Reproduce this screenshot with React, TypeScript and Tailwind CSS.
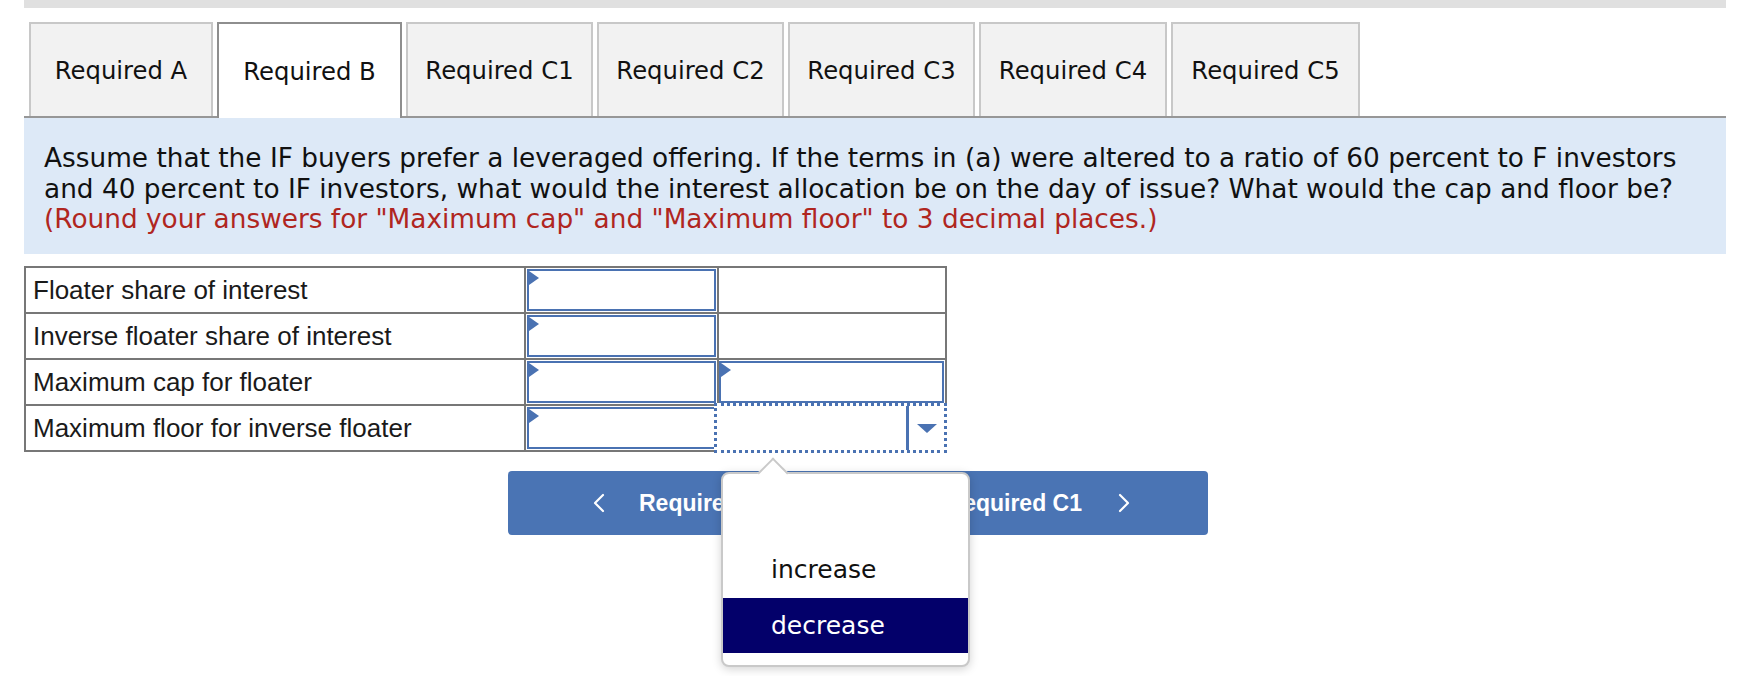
import { ChevronLeft, ChevronRight } from "lucide-react";

const tabs = [
  { label: "Required A", w: "w-[184px]" },
  { label: "Required B", w: "w-[185px]", active: true },
  { label: "Required C1", w: "w-[187px]" },
  { label: "Required C2", w: "w-[187px]" },
  { label: "Required C3", w: "w-[187px]" },
  { label: "Required C4", w: "w-[188px]" },
  { label: "Required C5", w: "w-[189px]" },
];

const rows = [
  { label: "Floater share of interest", third: "none" },
  { label: "Inverse floater share of interest", third: "none" },
  { label: "Maximum cap for floater", third: "input" },
  { label: "Maximum floor for inverse floater", third: "select" },
];

// blue answer box with the little flag in the corner
function AnswerBox() {
  return (
    <div className="relative h-full w-full border-2 border-[#4a72b2] bg-white">
      <span className="absolute left-0 top-0 h-0 w-0 border-y-[7px] border-l-[10px] border-y-transparent border-l-[#4a72b2]" />
    </div>
  );
}

export default function App() {
  return (
    <div className="relative h-[676px] w-[1740px] overflow-hidden bg-white font-['DejaVu_Sans',Verdana,sans-serif] text-[#111]">
      <div className="ml-[24px] h-[8px] w-[1702px] bg-[#e0e0e0]" />

      {/* tabs */}
      <div className="ml-[24px] mt-[14px] flex h-[96px] w-[1702px] gap-[4px] border-b-2 border-[#979797] pl-[5px]">
        {tabs.map((t) =>
          t.active ? (
            <div
              key={t.label}
              className={`${t.w} relative z-10 -mb-[2px] flex h-[96px] items-center justify-center border-2 border-b-0 border-[#8e8e8e] bg-white pt-[2px] text-[24.3px]`}
            >
              {t.label}
            </div>
          ) : (
            <div
              key={t.label}
              className={`${t.w} flex h-[94px] items-center justify-center border-2 border-b-0 border-[#c8c8c8] bg-[#f2f2f2] pt-[2px] text-[24.3px]`}
            >
              {t.label}
            </div>
          )
        )}
      </div>

      {/* question */}
      <div className="ml-[24px] h-[136px] w-[1702px] bg-[#dde9f7] pl-[20px] pr-[20px] pt-[25px] text-[26.35px] leading-[30.5px]">
        Assume that the IF buyers prefer a leveraged offering. If the terms in (a) were altered to a ratio of 60 percent to F investors
        and 40 percent to IF investors, what would the interest allocation be on the day of issue? What would the cap and floor be?
        <br />
        <span className="text-[#b0261f]">
          (Round your answers for "Maximum cap" and "Maximum floor" to 3 decimal places.)
        </span>
      </div>

      {/* answer table */}
      <div className="ml-[24px] mt-[12px] w-[923px] border-2 border-[#777] font-['Liberation_Sans',Arial,sans-serif] text-[26px] text-[#1a1a1a]">
        {rows.map((r, i) => (
          <div key={r.label} className={i > 0 ? "flex h-[46px] border-t-2 border-[#777]" : "flex h-[44px]"}>
            <div className="flex w-[500px] items-center border-r-2 border-[#777] pl-[7px]">{r.label}</div>
            <div className="w-[193px] border-r-2 border-[#777] p-[1px]">
              <AnswerBox />
            </div>
            <div className="relative flex-1">
              {r.third === "input" && (
                <div className="h-full p-[1px] pl-0">
                  <AnswerBox />
                </div>
              )}
              {r.third === "select" && (
                <div className="absolute -bottom-[3px] -left-[5px] -right-[2px] -top-[3px] flex border-[3px] border-dotted border-[#4a72b2] bg-white">
                  <div className="flex-1 border-r-[3px] border-[#4a72b2]" />
                  <div className="flex w-[35px] items-center justify-center">
                    <span className="h-0 w-0 border-x-[10px] border-t-[9px] border-x-transparent border-t-[#4a72b2]" />
                  </div>
                </div>
              )}
            </div>
          </div>
        ))}
      </div>

      {/* previous / next */}
      <div className="ml-[508px] mt-[19px] flex h-[64px] w-[700px] rounded-[4px] bg-[#4a74b4] font-['Liberation_Sans',Arial,sans-serif] text-[23px] font-bold text-white">
        <div className="flex flex-1 items-center gap-[24px] pl-[75px]">
          <ChevronLeft size={32} strokeWidth={1.6} />
          <span>Required A</span>
        </div>
        <div className="flex flex-1 items-center justify-end gap-[26px] pr-[68px]">
          <span>Required C1</span>
          <ChevronRight size={32} strokeWidth={1.6} />
        </div>
      </div>

      {/* open dropdown list */}
      <div className="absolute left-[721px] top-[472px] z-20 h-[195px] w-[249px] rounded-[8px] border-2 border-[#c9c9c9] bg-white py-[13px] text-[25px] shadow-[0_2px_10px_rgba(0,0,0,0.18)]">
        <span className="absolute -top-[12px] left-[39px] h-[22px] w-[22px] rotate-45 border-l-2 border-t-2 border-[#c9c9c9] bg-white" />
        <div className="relative h-[55px]" />
        <div className="relative flex h-[56px] items-center pl-[48px]">increase</div>
        <div className="relative flex h-[55px] items-center bg-[#03006a] pl-[48px] text-white">decrease</div>
      </div>
    </div>
  );
}
